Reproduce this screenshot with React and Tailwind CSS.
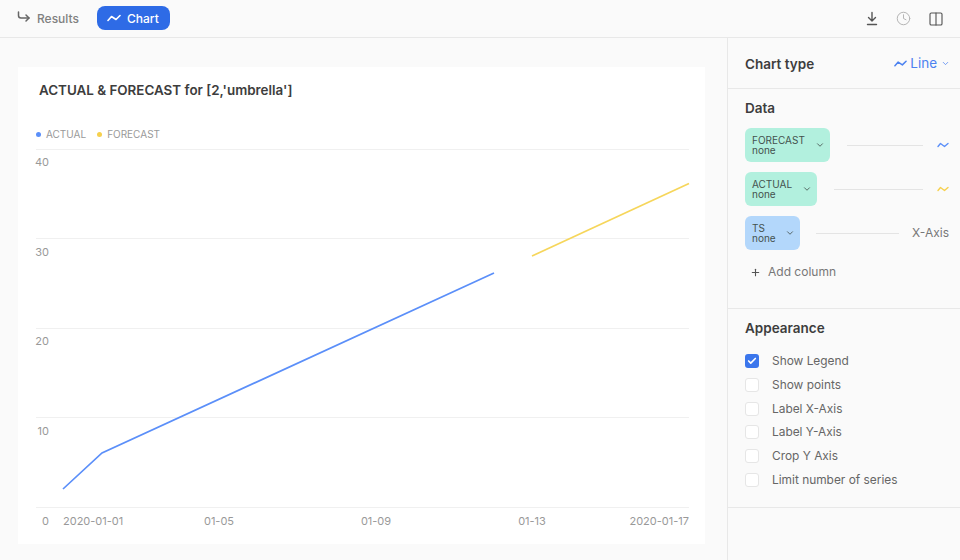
import React from 'react'
import { Check, ChevronDown, Plus, Clock, Columns2 } from 'lucide-react'

const Squiggle = ({ className, size = 14, width = 1.6 }) => (
  <svg width={size} height={size} viewBox="0 0 14 14" fill="none" stroke="currentColor" strokeWidth={width} strokeLinecap="round" strokeLinejoin="round" className={className}>
    <path d="M1 9.5 L4.5 5.5 L9 8.5 L13 4.5" />
  </svg>
)

const SeriesMark = ({ className }) => (
  <svg width="12" height="8" viewBox="0 0 12 8" fill="none" stroke="currentColor" strokeWidth="1.4" strokeLinecap="round" strokeLinejoin="round" className={className}>
    <path d="M1 5.5 L3.5 2.5 L7.5 5.5 L11 2.5" />
  </svg>
)

const columns = [
  { name: 'FORECAST', color: 'bg-[#b2f0de]', pill: 'w-[85px]', line: 'ml-[17px] mr-[14px]', right: <SeriesMark className="text-[#5b8ff9]" /> },
  { name: 'ACTUAL', color: 'bg-[#b2f0de]', pill: 'w-[72px]', line: 'ml-[17px] mr-[14px]', right: <SeriesMark className="text-[#f6d04d]" /> },
  { name: 'TS', color: 'bg-[#b3d7fb]', pill: 'w-[55px]', line: 'ml-[16px] mr-[13px]', right: <span className="text-[12px] text-[#777]">X-Axis</span> },
]

const options = [
  { label: 'Show Legend', checked: true },
  { label: 'Show points' },
  { label: 'Label X-Axis' },
  { label: 'Label Y-Axis' },
  { label: 'Crop Y Axis' },
  { label: 'Limit number of series' },
]

const gridY = [149, 238, 328, 417, 507]
const yLabels = [['40', 166], ['30', 256], ['20', 345], ['10', 435], ['0', 525]]
const xLabels = [
  ['2020-01-01', 63, 'start'],
  ['01-05', 219, 'middle'],
  ['01-09', 376, 'middle'],
  ['01-13', 532, 'middle'],
  ['2020-01-17', 689, 'end'],
]

const Chart = () => (
  <svg width="687" height="395" viewBox="18 140 687 395" className="block">
    {gridY.map((y) => (
      <line key={y} x1="36" x2="689" y1={y + 0.5} y2={y + 0.5} stroke="#f0f0f0" />
    ))}
    {yLabels.map(([t, y]) => (
      <text key={t} x="49" y={y} textAnchor="end" fontSize="11" fill="#999999">{t}</text>
    ))}
    {xLabels.map(([t, x, a]) => (
      <text key={t} x={x} y="525" textAnchor={a} fontSize="11" fill="#999999">{t}</text>
    ))}
    <polyline points="63,489 102,453 494,273" fill="none" stroke="#5b8ff9" strokeWidth="1.7" />
    <line x1="532" y1="256" x2="689" y2="183.5" stroke="#f6d65b" strokeWidth="1.7" />
  </svg>
)

const App = () => {
  return (
    <div className="w-[960px] h-[560px] overflow-hidden flex flex-col bg-[#fafafa] font-['Inter',sans-serif] text-[#3d3d3d]">
      <div className="h-[38px] shrink-0 border-b border-[#e8e8e8] flex items-center pl-4 pr-[16px]">
        <div className="flex items-center w-[81px] gap-[6px] text-[#808080]">
          <svg width="15" height="15" viewBox="0 0 15 15" fill="none" stroke="#666" strokeWidth="1.5" strokeLinecap="round" strokeLinejoin="round" className="-mt-[3px]">
            <path d="M2.5 2 V5.5 Q2.5 8 5 8 H13" />
            <path d="M10 5 L13 8 L10 11" />
          </svg>
          <span className="text-[12px] font-medium">Results</span>
        </div>
        <div className="flex items-center gap-[6px] h-6 w-[73px] pl-[10px] -mt-[1px] rounded-lg bg-[#2e6be6] text-white">
          <Squiggle size={14} />
          <span className="text-[12px] font-medium mt-[1px]">Chart</span>
        </div>
        <div className="ml-auto flex items-center gap-[17px]">
          <svg width="14" height="16" viewBox="0 0 14 16" fill="none" stroke="#555" strokeWidth="1.4" strokeLinecap="round" strokeLinejoin="round">
            <path d="M7 1.5 V10 M3.5 6.5 L7 10 L10.5 6.5 M2.5 13.5 H11.5" />
          </svg>
          <Clock size={15} color="#b5b5b5" strokeWidth={1.6} />
          <Columns2 size={16} color="#555" strokeWidth={1.7} />
        </div>
      </div>

      <div className="flex flex-1 min-h-0">
        <div className="w-[727px] shrink-0 pt-[29px] pl-[18px]">
          <div className="w-[687px] h-[477px] bg-white">
            <div className="pl-[21px] pt-[13px] text-[13.4px] font-semibold h-[61px]">
              ACTUAL &amp; FORECAST for [2,'umbrella']
            </div>
            <div className="h-[12px] pt-[1px] pl-[18px] flex items-center text-[10px] text-[#999]">
              <span className="w-[5px] h-[5px] rounded-full bg-[#5b8ff9] mr-[5px]" />
              <span className="mr-[11px]">ACTUAL</span>
              <span className="w-[5px] h-[5px] rounded-full bg-[#f6d04d] mr-[5px]" />
              <span>FORECAST</span>
            </div>
            <Chart />
          </div>
        </div>

        <div className="w-[233px] border-l border-[#e8e8e8]">
          <div className="h-[51px] border-b border-[#e8e8e8] flex items-center justify-between pl-[17px] pr-[10px]">
            <span className="text-[13.5px] font-semibold mt-[3px]">Chart type</span>
            <div className="flex items-center gap-[3px] text-[#4c82f0] ml-[2px] mt-[1px]">
              <Squiggle size={13} />
              <span className="text-[13.5px]">Line</span>
              <ChevronDown size={9} className="ml-[1px]" />
            </div>
          </div>

          <div className="h-[220px] border-b border-[#e8e8e8] pl-[17px] pr-[11px] pt-[9px]">
            <div className="text-[13.5px] font-semibold h-[30px]">Data</div>
            <div className="flex flex-col gap-[10px]">
              {columns.map((c) => (
                <div key={c.name} className="flex items-center">
                  <div className={`${c.pill} ${c.color} h-[34px] rounded-md pl-[7px] pr-[5px] flex items-center justify-between text-[#44524e]`}>
                    <div className="text-[10px] leading-[10.5px]">
                      <div>{c.name}</div>
                      <div>none</div>
                    </div>
                    <ChevronDown size={10} />
                  </div>
                  <div className={`flex-1 h-px bg-[#e4e4e4] ${c.line}`} />
                  {c.right}
                </div>
              ))}
            </div>
            <div className="flex items-center gap-[7px] mt-[13px] pl-[5px] text-[12px] text-[#777]">
              <Plus size={11} strokeWidth={2.4} color="#555" />
              <span>Add column</span>
            </div>
          </div>

          <div className="h-[199px] border-b border-[#e8e8e8] pl-[17px] pt-[9px]">
            <div className="text-[13.5px] font-semibold h-[36px]">Appearance</div>
            <div className="flex flex-col gap-[9.8px]">
              {options.map((o) => (
                <div key={o.label} className="flex items-center h-[14px] gap-[13px] text-[11.9px] text-[#666]">
                  {o.checked ? (
                    <span className="w-[14px] h-[14px] rounded-[3px] bg-[#3b76ec] flex items-center justify-center">
                      <Check size={10} color="white" strokeWidth={4} />
                    </span>
                  ) : (
                    <span className="w-[14px] h-[14px] rounded-[3px] bg-white border border-[#e6e6e6]" />
                  )}
                  <span>{o.label}</span>
                </div>
              ))}
            </div>
          </div>
        </div>
      </div>
    </div>
  )
}

export default App
